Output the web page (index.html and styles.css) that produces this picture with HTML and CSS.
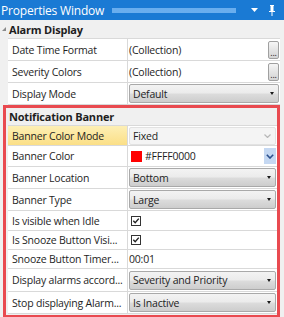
FILE: index.html
```html
<!DOCTYPE html>
<html lang="en">
<head>
    <meta charset="UTF-8">
    <meta name="viewport" content="width=device-width, initial-scale=1.0">
    <title>Properties Window</title>
    <link rel="stylesheet" href="styles.css">
</head>
<body>
    <div class="titlebar">
        <span class="caption">Properties Window</span>
        <span class="grip"></span>
        <svg class="menu" width="7" height="4" viewBox="0 0 7 4"><path d="M0 0h7L3.5 4z" fill="#fff"/></svg>
        <svg class="pin" width="8" height="11" viewBox="0 0 8 11"><path d="M2 0h4v1H5.5v5H7v1H4.5v4h-1V7H1V6h1.5V1H2z" fill="#fff"/></svg>
    </div>

    <div class="grid">
        <div class="cat"><span class="tri"></span>Alarm Display</div>
        <div class="rows">
            <div class="row">
                <div class="name">Date Time Format</div>
                <div class="val">(Collection)<span class="dots">...</span></div>
            </div>
            <div class="row">
                <div class="name">Severity Colors</div>
                <div class="val">(Collection)<span class="dots">...</span></div>
            </div>
            <div class="row">
                <div class="name">Display Mode</div>
                <div class="val"><div class="combo">Default<i></i></div></div>
            </div>
        </div>

        <div class="box">
            <div class="cat inner">Notification Banner</div>
            <div class="rows">
                <div class="row h20">
                    <div class="name sel">Banner Color Mode</div>
                    <div class="val"><div class="combo flat">Fixed<svg width="7" height="4" viewBox="0 0 7 4"><path d="M0.5 0.5L3.5 3.5L6.5 0.5" fill="none" stroke="#b8b8b8" stroke-width="1.2"/></svg></div></div>
                </div>
                <div class="row h21">
                    <div class="name">Banner Color</div>
                    <div class="val"><span class="swatch"></span>#FFFF0000<span class="pick"><svg width="8" height="5" viewBox="0 0 8 5"><path d="M0.8 0.8L4 4L7.2 0.8" fill="none" stroke="#2b4f8c" stroke-width="1.6"/></svg></span></div>
                </div>
                <div class="row">
                    <div class="name">Banner Location</div>
                    <div class="val"><div class="combo">Bottom<i></i></div></div>
                </div>
                <div class="row">
                    <div class="name">Banner Type</div>
                    <div class="val"><div class="combo">Large<i></i></div></div>
                </div>
                <div class="row h20">
                    <div class="name">Is visible when Idle</div>
                    <div class="val"><svg class="check" width="10" height="10" viewBox="0 0 10 10"><rect x="0.5" y="0.5" width="9" height="9" fill="#fff" stroke="#333"/><path d="M2.3 4.8L4.2 6.8L7.8 2.6" fill="none" stroke="#222" stroke-width="1.4"/></svg></div>
                </div>
                <div class="row h19">
                    <div class="name">Is Snooze Button Visi...</div>
                    <div class="val"><svg class="check" width="10" height="10" viewBox="0 0 10 10"><rect x="0.5" y="0.5" width="9" height="9" fill="#fff" stroke="#333"/><path d="M2.3 4.8L4.2 6.8L7.8 2.6" fill="none" stroke="#222" stroke-width="1.4"/></svg></div>
                </div>
                <div class="row h19">
                    <div class="name">Snooze Button Timer...</div>
                    <div class="val">00:01</div>
                </div>
                <div class="row h23">
                    <div class="name">Display alarms accord...</div>
                    <div class="val"><div class="combo">Severity and Priority<i></i></div></div>
                </div>
                <div class="row">
                    <div class="name">Stop displaying Alarm...</div>
                    <div class="val"><div class="combo">Is Inactive<i></i></div></div>
                </div>
            </div>
        </div>
    </div>
</body>
</html>
```

FILE: styles.css
```css
body{
    margin: 0;
    width: 284px;
    height: 317px;
    overflow: hidden;
    background-color: #f0f0f0;
    font-family: "Open Sans", "Noto Sans", sans-serif;
    font-size: 10.5px;
    letter-spacing: -0.2px;
    color: #1e1e1e;
}

/* title bar */
.titlebar{
    height: 20px;
    display: flex;
    align-items: center;
    background-color: #1a7ad4;
    color: #fff;
    font-size: 12px;
}
.caption{
    padding-left: 1px;
    white-space: nowrap;
}
.grip{
    flex: 1;
    height: 5px;
    margin: 1px 15px 0 8px;
    background-image: radial-gradient(circle, #6cb0f0 0.7px, transparent 0.9px);
    background-size: 2px 2px;
}
.menu{
    margin-right: 10px;
}
.pin{
    margin-right: 8px;
}

/* grid */
.grid{
    margin-right: 4px;
}
.cat{
    height: 18px;
    display: flex;
    align-items: center;
    font-weight: 700;
    font-size: 11px;
    padding-left: 2px;
}
.cat.inner{
    height: 17px;
    padding-left: 3px;
}
.tri{
    width: 0;
    height: 0;
    margin-right: 3px;
    border-left: 4px solid transparent;
    border-bottom: 4px solid #8a8a8a;
}
.rows{
    margin-left: 8px;
    border-top: 1px solid #d9d9d9;
}
.box .rows{
    margin-left: 2px;
}
.row{
    display: flex;
    height: 22px;
    box-sizing: border-box;
    border-bottom: 1px solid #d9d9d9;
    background-color: #fff;
}
.row.h19{ height: 19px; }
.row.h20{ height: 20px; }
.row.h21{ height: 21px; }
.row.h23{ height: 23px; }

.name{
    width: 115px;
    flex: none;
    padding-left: 4px;
    border-right: 1px solid #d9d9d9;
    display: flex;
    align-items: center;
    white-space: nowrap;
    overflow: hidden;
}
.name.sel{
    background: linear-gradient(#fdefb5, #fbdf86);
}
.val{
    flex: 1;
    display: flex;
    align-items: center;
    padding-left: 1px;
    padding-right: 1px;
    min-width: 0;
    white-space: nowrap;
}

.dots{
    margin-left: auto;
    width: 11px;
    height: 18px;
    box-sizing: border-box;
    border: 1px solid #a0a0a0;
    border-radius: 2px;
    background: linear-gradient(#f6f6f6, #e4e4e4 50%, #d4d4d4);
    font-size: 9px;
    line-height: 22px;
    text-align: center;
    color: #222;
    overflow: hidden;
}

.combo{
    flex: 1;
    height: 19px;
    box-sizing: border-box;
    display: flex;
    align-items: center;
    padding-left: 3px;
    padding-right: 4px;
    border: 1px solid #a9a9a9;
    border-radius: 2px;
    background: linear-gradient(#f3f3f3, #ebebeb 48%, #dcdcdc 52%, #cdcdcd);
}
.combo i{
    margin-left: auto;
    width: 0;
    height: 0;
    border-left: 2.5px solid transparent;
    border-right: 2.5px solid transparent;
    border-top: 3px solid #1a1a1a;
}
.combo.flat{
    height: 18px;
    border-color: #e2e2e2;
    background: #f4f4f4;
}
.combo svg{
    margin-left: auto;
}

.swatch{
    width: 11px;
    height: 11px;
    margin: 0 3px 0 2px;
    background-color: #ff0000;
}
.pick{
    margin-left: auto;
    width: 12px;
    height: 16px;
    display: flex;
    align-items: center;
    justify-content: center;
    background-color: #c5d8f2;
}
.check{
    margin-left: 2px;
}

/* highlight */
.box{
    margin-left: 3px;
    border: 3px solid #e94a50;
    border-bottom-width: 4px;
    padding-bottom: 1px;
}
```
